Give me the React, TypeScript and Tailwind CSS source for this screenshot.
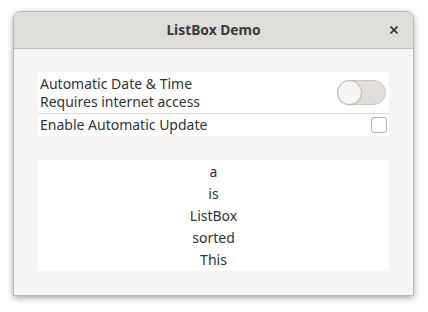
import { X } from "lucide-react"

const ITEMS = ["a", "is", "ListBox", "sorted", "This"]

export default function App() {
  return (
    <div className="w-[428px] h-[312px] bg-white pl-[13px] pt-[11px] font-['Noto_Sans',sans-serif] text-[#2e3436]">
      <div className="w-[401px] h-[285px] flex flex-col rounded-t-[8px] border border-[#bdbab6] bg-[#f6f5f4] shadow-[0_2px_6px_rgba(0,0,0,0.35)] overflow-hidden">
        {/* titlebar */}
        <div className="relative h-[37px] shrink-0 flex items-center justify-center bg-[#deddda] border-b border-[#c5c2be]">
          <span className="text-[13.8px] font-bold text-[#3a3a3a]">ListBox Demo</span>
          <X className="absolute right-[13px] top-[12px] size-[12px] text-[#2e2e2e]" strokeWidth={3.5} />
        </div>

        <div className="flex flex-col px-[24px] pt-[23px]">
          {/* settings list */}
          <div className="bg-white">
            <div className="h-[42px] flex items-center justify-between pl-[2px] pr-[3px] border-b border-[#dcdad6]">
              <div className="flex flex-col text-[14px] leading-[18px]">
                <span>Automatic Date &amp; Time</span>
                <span>Requires internet access</span>
              </div>
              <div className="w-[49px] h-[25px] rounded-full bg-[#e1dedb] border border-[#cdc7c2] flex items-center">
                <div className="size-[25px] -ml-px rounded-full bg-[#f6f5f4] border border-[#bfb8b1] shadow-[0_1px_1px_rgba(0,0,0,0.1)]" />
              </div>
            </div>
            <div className="h-[22px] flex items-center justify-between pl-[2px] pr-[2px]">
              <span className="text-[14px] leading-[18px]">Enable Automatic Update</span>
              <div className="size-[16px] rounded-[3px] border border-[#b6b0aa] bg-white" />
            </div>
          </div>

          {/* sorted list */}
          <div className="mt-[24px] bg-white flex flex-col pb-px">
            {ITEMS.map((item) => (
              <div key={item} className="h-[22px] flex items-center justify-center text-[14px]">
                {item}
              </div>
            ))}
          </div>
        </div>
      </div>
    </div>
  )
}
